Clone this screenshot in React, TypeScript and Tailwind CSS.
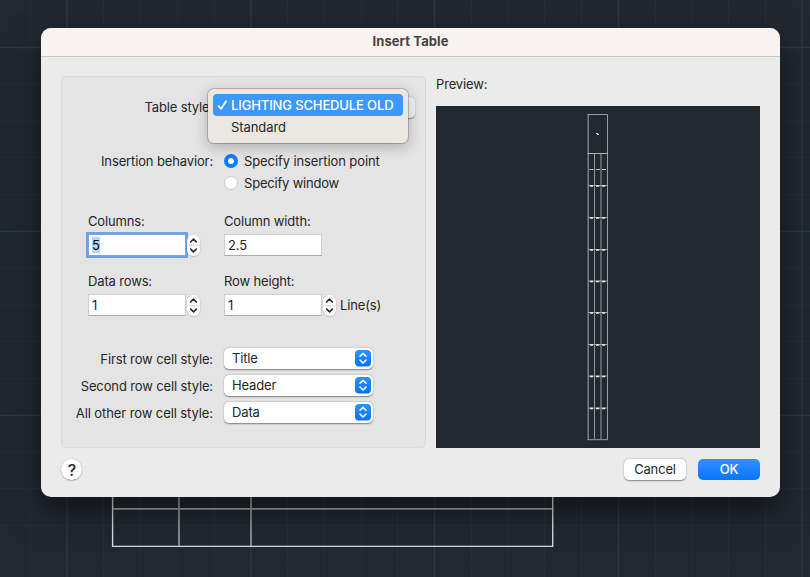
const minorX = [30.5, 103.5, 140.5, 177.5, 214.5, 287.5, 324.5, 361.5, 397.5, 471.5, 508.5, 544.5, 581.5, 655.5, 691.5, 728.5, 765.5]
const majorX = [67, 251, 434.5, 618.5, 802]
const minorY = [11, 84.5, 121.5, 157.5, 194.5, 268.5, 305.5, 341.5, 378.5, 451.5, 488.5, 525.5, 562]
const majorY = [47.5, 231.5, 415.5]

const previewRows = [185.5, 217.5, 249.5, 281, 312.5, 344.5, 376, 408]

const cellStyles = [
  { label: "First row cell style:", value: "Title", tracking: "tracking-[-0.12px]" },
  { label: "Second row cell style:", value: "Header", tracking: "tracking-[-0.13px]" },
  { label: "All other row cell style:", value: "Data", tracking: "tracking-[-0.09px]" },
]

function DrawingCanvas() {
  return (
    <svg className="absolute inset-0" width="810" height="577" fill="none">
      <g stroke="#272d38">
        {minorX.map((x) => (
          <path key={x} d={`M${x} 0V577`} />
        ))}
        {minorY.map((y) => (
          <path key={y} d={`M0 ${y}H810`} />
        ))}
      </g>
      <g stroke="#2f3746" strokeWidth="1.3">
        {majorX.map((x) => (
          <path key={x} d={`M${x} 0V577`} />
        ))}
        {majorY.map((y) => (
          <path key={y} d={`M0 ${y}H810`} />
        ))}
      </g>
    </svg>
  )
}

// Table already placed in the drawing, mostly hidden by the dialog
function PlacedTable() {
  return (
    <svg className="absolute inset-0" width="810" height="577" fill="none">
      <path d="M179 490V546M251 490V546" stroke="#929398" strokeWidth="1.8" />
      <path d="M112 508.8H553" stroke="#a2a3a6" strokeWidth="1.7" />
      <path d="M112.6 490V546.4H552.7V490" stroke="#d8d9db" strokeWidth="1.4" />
    </svg>
  )
}

function TablePreview() {
  return (
    <svg className="block bg-[#212830]" width="324" height="342" viewBox="436 106 324 342" fill="none">
      <path d="M588.2 114V440" stroke="#7c7f84" strokeWidth="1.5" />
      <path d="M587.5 114.5H607.5V439.7H587.5" stroke="#9a9ca0" />
      <path d="M587.5 153.5H607.5" stroke="#b0b2b5" />
      <path d="M594.5 154V439" stroke="#95989c" />
      <path d="M601 154V439" stroke="#6e7177" strokeWidth="1.6" />
      <path d="M596.3 133.5h2M597 134.5h2" stroke="#e6e7e8" />
      <path d="M589.5 169.5h4M595.8 169.5h4M602 169.5h4" stroke="#e0e1e2" strokeDasharray="1.8 0.3" />
      {previewRows.map((y) => (
        <g key={y}>
          <path d={`M588 ${y}H608`} stroke="#9fa1a4" />
          <path d={`M590 ${y + 0.5}h3M596 ${y + 0.5}h3.2M602.2 ${y + 0.5}h3`} stroke="#eeeff0" strokeWidth="1.3" />
        </g>
      ))}
    </svg>
  )
}

function Stepper() {
  return (
    <div className="ml-px h-[21px] w-[13px] rounded-[6px] bg-white shadow-[0_0.5px_1.5px_rgba(0,0,0,0.3)]">
      <svg width="13" height="21" fill="none">
        <path d="M0 10.5H13" stroke="#e2e2e2" />
        <path d="M3.7 6.8L6.5 4.2L9.3 6.8M3.7 14.2L6.5 16.8L9.3 14.2" stroke="#2e2e2e" strokeWidth="1.7" strokeLinecap="round" strokeLinejoin="round" />
      </svg>
    </div>
  )
}

function TextField({ value, focused }: { value: string; focused?: boolean }) {
  return (
    <div
      className={`flex h-[22px] w-[98px] items-center border bg-white pl-[3px] ${
        focused
          ? "border-[#75a6e5] shadow-[0_0_0_2px_#6f9fe6]"
          : "border-[#cfcfcf] border-b-[#a9a9a9]"
      }`}
    >
      <span className={focused ? "bg-[#b3d7ff] leading-4 text-black" : "leading-4"}>{value}</span>
    </div>
  )
}

function PopupButton({ value }: { value: string }) {
  return (
    <div className="flex h-[21px] w-[149px] items-center justify-between rounded-[5px] bg-white pr-[2px] pl-2 shadow-[0_0.5px_1.5px_rgba(0,0,0,0.45)]">
      <span className="pb-px">{value}</span>
      <svg width="16" height="17" fill="none">
        <defs>
          <linearGradient id="popup" x1="0" y1="0" x2="0" y2="1">
            <stop stopColor="#2f91ff" />
            <stop offset="1" stopColor="#0375fb" />
          </linearGradient>
        </defs>
        <rect width="16" height="16.5" rx="4" fill="url(#popup)" />
        <path d="M5 6.3L8 3.4L11 6.3M5 10.1L8 13L11 10.1" stroke="white" strokeWidth="1.5" strokeLinecap="round" strokeLinejoin="round" />
      </svg>
    </div>
  )
}

function TableStyleMenu() {
  return (
    <div className="absolute -top-[7px] left-[146px] h-[54px] w-[200px] rounded-[6px] bg-[#ebe8e3] p-[5px] shadow-[0_0_0_1px_rgba(0,0,0,0.2),0_4px_14px_rgba(0,0,0,0.25)]">
      <div className="flex h-[22px] w-[190px] items-center rounded-[4px] bg-[#3b99fe] text-white">
        <svg className="mr-[3px] ml-1" width="11" height="12" fill="none">
          <path d="M1.6 7L4.2 9.8L9 2.2" stroke="white" strokeWidth="1.7" strokeLinecap="round" strokeLinejoin="round" />
        </svg>
        <span className="font-medium tracking-[-0.13px] whitespace-nowrap">LIGHTING SCHEDULE OLD</span>
      </div>
      <div className="flex h-[22px] items-center pl-[18px] tracking-[-0.08px]">Standard</div>
    </div>
  )
}

function SettingsPanel() {
  return (
    <div className="h-[372px] w-[365px] rounded-[5px] border border-[#d9d9d9] bg-[#e4e4e4] pt-[19px]">
      <div className="relative flex h-[22px] items-center">
        <div className="w-[151px] text-right">Table style:</div>
        <div className="ml-[11px] h-[21px] w-[191px] rounded-[5px] bg-[#f3f3f3] shadow-[0_0.5px_1.5px_rgba(0,0,0,0.4)]" />
        <TableStyleMenu />
      </div>

      <div className="mt-8 flex h-[22px] items-center">
        <div className="w-[151px] text-right tracking-[-0.13px]">Insertion behavior:</div>
        <div className="mr-[6px] ml-[11px] flex h-[14px] w-[14px] items-center justify-center rounded-full bg-[#0a7aff]">
          <div className="h-[6px] w-[6px] rounded-full bg-white" />
        </div>
        <span className="tracking-[-0.1px]">Specify insertion point</span>
      </div>
      <div className="flex h-[22px] items-center pl-[162px]">
        <div className="mr-[6px] h-[14px] w-[14px] rounded-full border border-[#c9c9c9] bg-white" />
        <span className="tracking-[-0.2px]">Specify window</span>
      </div>

      <div className="mt-[17px] flex pl-[26px]">
        <div className="w-[136px]">
          <div className="h-[23px] leading-5">Columns:</div>
          <div className="flex items-center">
            <TextField value="5" focused />
            <Stepper />
          </div>
        </div>
        <div>
          <div className="h-[23px] leading-5">Column width:</div>
          <TextField value="2.5" />
        </div>
      </div>

      <div className="mt-[15px] flex pl-[26px]">
        <div className="w-[136px]">
          <div className="h-[23px] leading-5">Data rows:</div>
          <div className="flex items-center">
            <TextField value="1" />
            <Stepper />
          </div>
        </div>
        <div>
          <div className="h-[23px] leading-5">Row height:</div>
          <div className="flex items-center">
            <TextField value="1" />
            <Stepper />
            <span className="ml-1">Line(s)</span>
          </div>
        </div>
      </div>

      <div className="mt-8 flex flex-col gap-[6px]">
        {cellStyles.map((row) => (
          <div key={row.label} className="flex h-[21px] items-center">
            <div className={`w-[151px] text-right ${row.tracking}`}>{row.label}</div>
            <div className="ml-[11px]">
              <PopupButton value={row.value} />
            </div>
          </div>
        ))}
      </div>
    </div>
  )
}

export default function App() {
  return (
    <div className="relative h-[577px] w-[810px] overflow-hidden bg-[#212830] pt-7 pl-[41px] font-['Inter',sans-serif] text-[13px] leading-4 tracking-[-0.15px] text-[#262626]">
      <DrawingCanvas />
      <PlacedTable />

      <div className="relative h-[469px] w-[739px] rounded-[10px] bg-[#ebebeb] shadow-[0_14px_34px_rgba(0,0,0,0.5)]">
        <div className="flex h-[29px] items-center justify-center rounded-t-[10px] border-b border-[#c8c6c5] bg-[#f8f3f0] pb-[2px] font-bold tracking-[0.1px] text-[#444]">
          Insert Table
        </div>

        <div className="flex gap-[10px] pt-[19px] pl-5">
          <SettingsPanel />
          <div>
            <div className="h-[30px]">Preview:</div>
            <TablePreview />
          </div>
        </div>

        <div className="flex items-center px-5 pt-[11px]">
          <div className="flex h-[21px] w-[21px] items-center justify-center rounded-full bg-white pl-px text-[16px] font-medium shadow-[0_0.5px_1.5px_rgba(0,0,0,0.45)]">
            ?
          </div>
          <div className="ml-auto flex h-[21px] w-[62px] items-center justify-center rounded-[5px] bg-white pb-[2px] shadow-[0_0.5px_1.5px_rgba(0,0,0,0.45)]">
            Cancel
          </div>
          <div className="ml-3 flex h-[21px] w-[62px] items-center justify-center rounded-[5px] bg-gradient-to-b from-[#2f91ff] to-[#0375fb] pb-[2px] font-medium text-white">
            OK
          </div>
        </div>
      </div>
    </div>
  )
}
